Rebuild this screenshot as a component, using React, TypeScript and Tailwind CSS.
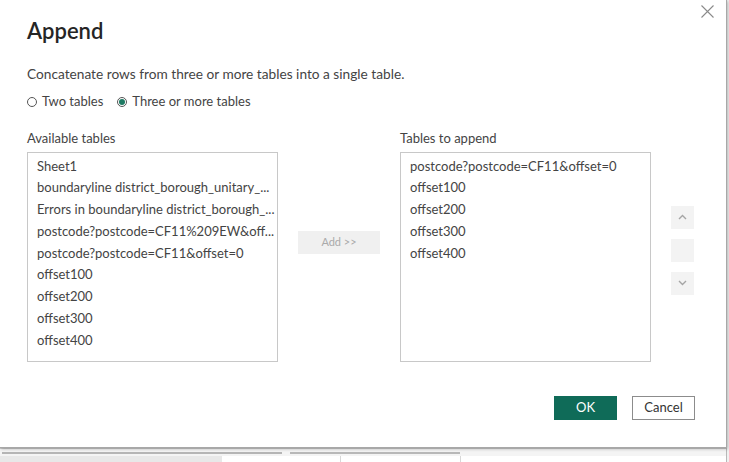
import React, { useState } from 'react';

const availableTables = [
  'Sheet1',
  'boundaryline district_borough_unitary_...',
  'Errors in boundaryline district_borough_...',
  'postcode?postcode=CF11%209EW&off...',
  'postcode?postcode=CF11&offset=0',
  'offset100',
  'offset200',
  'offset300',
  'offset400',
];

const appendTables = ['postcode?postcode=CF11&offset=0', 'offset100', 'offset200', 'offset300', 'offset400'];

const font = { fontFamily: 'Lato, "Noto Sans", sans-serif' };

const Radio: React.FC<{ checked: boolean; label: string; onClick: () => void }> = ({ checked, label, onClick }) => (
  <button type="button" onClick={onClick} className="flex items-center gap-[5px] text-[13px] text-[#444]">
    <span className="w-[10px] h-[10px] rounded-full border-[1.5px] border-[#555] flex items-center justify-center">
      {checked && <span className="w-[6px] h-[6px] rounded-full bg-[#1d7a63]" />}
    </span>
    {label}
  </button>
);

const ListBox: React.FC<{ items: string[] }> = ({ items }) => (
  <div className="w-[251px] h-[210px] border border-[#c8c8c8] pt-[3px] px-[9px]">
    {items.map(item => (
      <div key={item} className="h-[21.8px] leading-[21.8px] text-[13px] text-[#444] whitespace-nowrap">
        {item}
      </div>
    ))}
  </div>
);

const Chevron: React.FC<{ up?: boolean; faded?: boolean }> = ({ up, faded }) => (
  <div className="w-[23px] h-[23px] bg-[#f3f3f3] flex items-center justify-center">
    {!faded && (
      <svg width="9" height="6" viewBox="0 0 9 6" fill="none" stroke="#a5a5a5" strokeWidth="1.4">
        {up ? <path d="M1 5 L4.5 1.5 L8 5" /> : <path d="M1 1 L4.5 4.5 L8 1" />}
      </svg>
    )}
  </div>
);

export default function App() {
  const [mode, setMode] = useState<'two' | 'three'>('three');

  return (
    <div className="relative w-[729px] h-[462px] bg-white overflow-hidden" style={font}>
      {/* spreadsheet behind the dialog */}
      <div className="absolute left-0 top-[448px] w-[729px] h-[14px] flex flex-col">
        <div className="h-[8px] bg-[#f4f4f4] border-t border-[#c8c8c8] flex items-center">
          <div className="ml-[2px] w-[280px] h-[2px] bg-[#b5b5b5]" />
          <div className="ml-[8px] w-[170px] h-[2px] bg-[#b8b8b8]" />
        </div>
        <div className="flex-1 flex">
          <div className="w-[222px] bg-[#e8e8e8]" />
          <div className="w-[119px] border-r border-[#d8d8d8]" />
          <div className="w-[120px] border-r border-[#d8d8d8]" />
        </div>
      </div>
      <div className="absolute right-0 top-0 w-[3px] h-[462px] bg-[#f0f0f0] border-l border-[#b8b8b8]" />

      {/* dialog */}
      <div className="absolute left-0 top-0 w-[727px] h-[448px] bg-white border-r border-b border-[#a8a8a8] shadow-[1px_1px_3px_rgba(0,0,0,0.25)] px-[27px] pt-[17px]">
        <button type="button" className="absolute right-[11px] top-[4px] w-[15px] h-[15px]">
          <svg width="15" height="15" viewBox="0 0 15 15" stroke="#8a8a8a" strokeWidth="1.1">
            <path d="M1.5 1.5 L13.5 13.5 M13.5 1.5 L1.5 13.5" />
          </svg>
        </button>

        <h1 className="text-[22px] font-semibold text-[#252525] leading-[28px]">Append</h1>
        <p className="mt-[20px] text-[13.7px] text-[#444] leading-[18px]">
          Concatenate rows from three or more tables into a single table.
        </p>
        <div className="mt-[9px] flex items-center gap-[14px]">
          <Radio checked={mode === 'two'} label="Two tables" onClick={() => setMode('two')} />
          <Radio checked={mode === 'three'} label="Three or more tables" onClick={() => setMode('three')} />
        </div>

        <div className="mt-[18px] flex items-start">
          <div>
            <div className="text-[13px] text-[#444] leading-[16px] mb-[6px]">Available tables</div>
            <ListBox items={availableTables} />
          </div>
          <div className="ml-[20px] mt-[101px] w-[82px] h-[23px] bg-[#f0f0f0] text-[11px] text-[#aaa] flex items-center justify-center">
            Add &gt;&gt;
          </div>
          <div className="ml-[20px]">
            <div className="text-[13px] text-[#444] leading-[16px] mb-[6px]">Tables to append</div>
            <ListBox items={appendTables} />
          </div>
          <div className="ml-[20px] mt-[76px] flex flex-col gap-[10px]">
            <Chevron up />
            <Chevron faded />
            <Chevron />
          </div>
        </div>

        <div className="mt-[34px] flex justify-end gap-[15px] pr-[4px]">
          <button type="button" className="w-[63px] h-[24px] bg-[#0f6b58] text-white text-[13px]">OK</button>
          <button type="button" className="w-[63px] h-[24px] border border-[#8c8c8c] text-[#333] text-[13px]">Cancel</button>
        </div>
      </div>
    </div>
  );
}
